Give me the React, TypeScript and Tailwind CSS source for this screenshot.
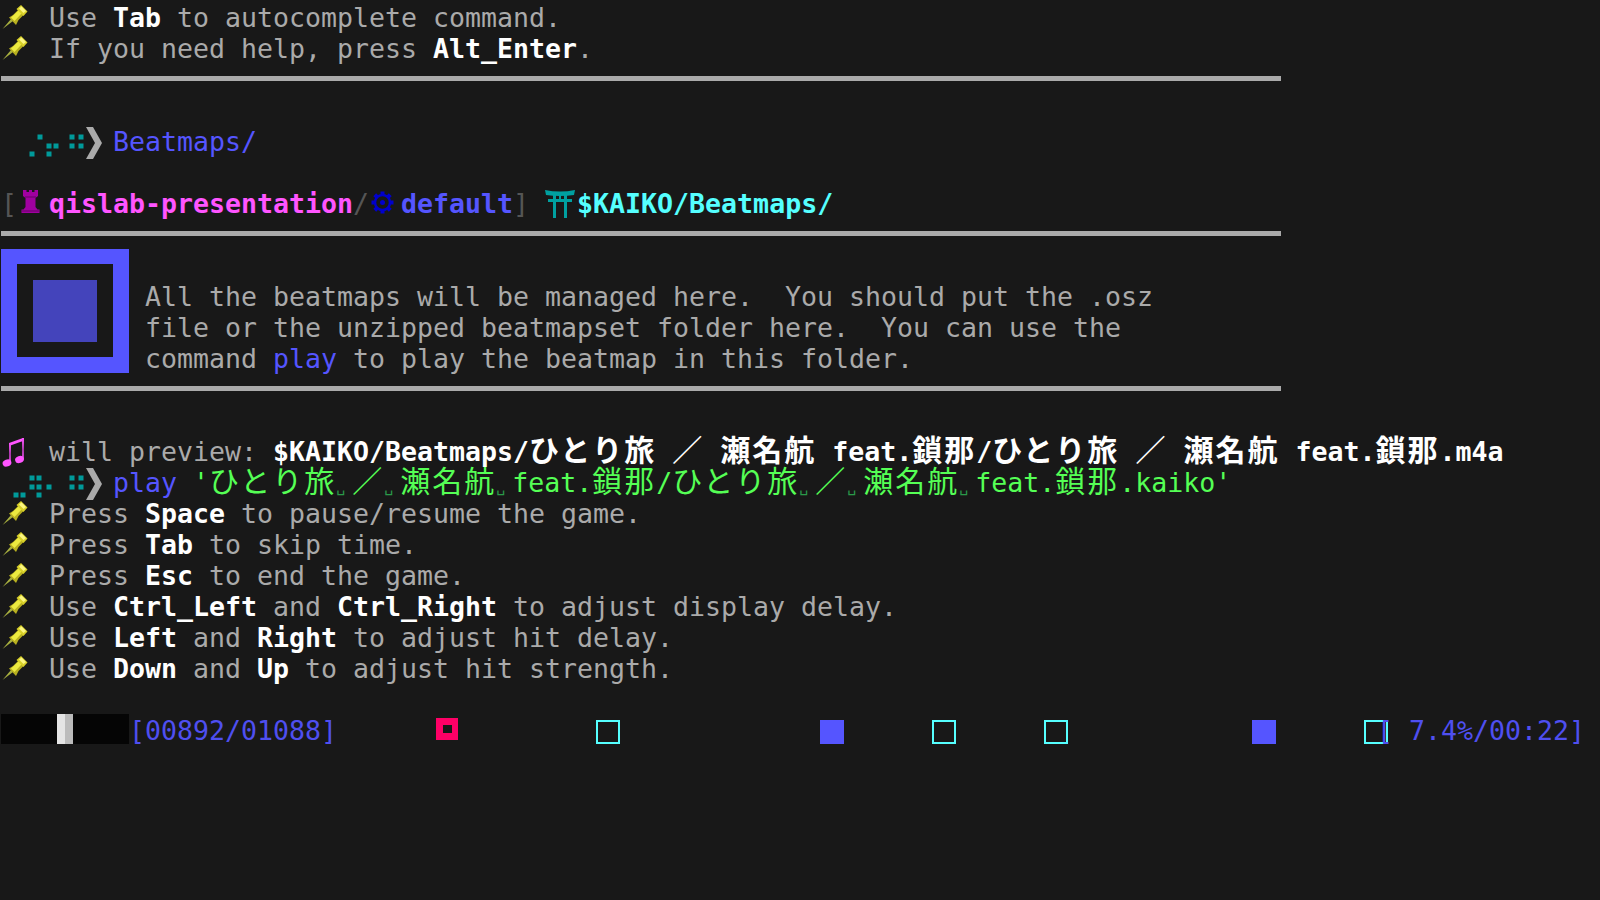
import React from "react";

const J = ({ children }: { children: React.ReactNode }) => (
  <span lang="ja" className="font-['Noto_Sans_CJK_JP',sans-serif] text-[30px] tracking-[2px] leading-[0]">
    {children}
  </span>
);

const Mark = () => (
  <span className="inline-block w-[16px] text-[15px] leading-[0] text-[#2a9a4a]">{"\u2423"}</span>
);

const B = ({ children }: { children: React.ReactNode }) => (
  <span className="font-bold text-white">{children}</span>
);

const Pin = () => (
  <svg width="48" height="31" viewBox="0 0 48 31" className="shrink-0 overflow-visible">
    <path d="M1.5 28 L10 18 L12 20 Z" fill="#a8b040" />
    <path d="M8 16.5 L12 14 L18 8 L23 13.5 L17.5 19 L15 24 Z" fill="#b8b020" />
    <path d="M10 16.5 L18 9 L21 12 L13.5 20 Z" fill="#ecea40" />
    <path d="M15.5 8 L20 4 L26.5 10.5 L22.5 15 Z" fill="#d8d028" />
    <path d="M18 7.5 L20.5 5.5 L25 10 L22.5 12 Z" fill="#fbf680" />
  </svg>
);

const Dots = ({ pts }: { pts: number[][] }) => (
  <svg width="112" height="31" viewBox="0 0 112 31" className="shrink-0 overflow-visible">
    {pts.map(([x, y], i) => (
      <rect key={i} x={x - 3.5} y={y - 2.5} width="5" height="5" fill="#009a9a" />
    ))}
    <polygon points="85,2 92,2 101,18 92,34 85,34 94,18" fill="#aaaaaa" />
  </svg>
);

const Row = ({ icon, children }: { icon?: React.ReactNode; children?: React.ReactNode }) => (
  <div className="flex h-[31px]">
    {icon}
    <div className="whitespace-pre leading-[33px]">{children}</div>
  </div>
);

const Rule = () => (
  <div className="flex h-[31px] items-center">
    <div className="h-[5px] w-[1280px] bg-[#aaaaaa]" />
  </div>
);

const Hint = ({ children }: { children: React.ReactNode }) => <Row icon={<Pin />}>{children}</Row>;

const Rook = () => (
  <svg width="32" height="31" viewBox="0 0 32 31" className="inline-block align-top">
    <path d="M6 3 H9.5 V5 H12 V3 H15 V5 H17.5 V3 H21 V9 L18.5 11 V20 L20.5 22.5 H22.5 V26 H4.5 V22.5 H6.5 L8.5 20 V11 L6 9 Z" fill="#a000a0" />
    <rect x="5" y="23.5" width="17" height="1" fill="#660066" />
    <rect x="8" y="9.5" width="11" height="1" fill="#660066" />
  </svg>
);

const Gear = () => (
  <svg width="32" height="31" viewBox="0 0 32 31" className="inline-block align-top">
    <circle cx="13.5" cy="15.5" r="7.5" fill="none" stroke="#0000cc" strokeWidth="2.5" />
    <circle cx="13.5" cy="15.5" r="2.5" fill="#0000cc" />
    {[0, 45, 90, 135, 180, 225, 270, 315].map((a) => (
      <rect key={a} x="11.5" y="4.5" width="4" height="3.5" fill="#0000cc" transform={`rotate(${a} 13.5 15.5)`} />
    ))}
  </svg>
);

const Torii = () => (
  <svg width="32" height="31" viewBox="0 0 32 31" className="inline-block align-top overflow-visible">
    <path d="M0 3 Q15 6 30 3 L29 8 Q15 10 1 8 Z" fill="#00a0a0" />
    <rect x="3" y="12" width="24" height="3" fill="#00a0a0" />
    <rect x="8" y="8" width="3" height="23" fill="#00a0a0" />
    <rect x="19" y="8" width="3" height="23" fill="#00a0a0" />
    <rect x="14" y="8" width="2" height="5" fill="#00a0a0" />
  </svg>
);

const Note = () => (
  <svg width="48" height="31" viewBox="0 0 48 31" className="shrink-0 overflow-visible">
    <defs>
      <linearGradient id="n" x1="0" y1="0" x2="0" y2="1">
        <stop offset="0" stopColor="#ff55ff" />
        <stop offset="0.55" stopColor="#a838a8" />
        <stop offset="1" stopColor="#d048d0" />
      </linearGradient>
    </defs>
    <path d="M8 8 L22 3 L22 6 L8 11 Z" fill="#ff55ff" />
    <rect x="8" y="8" width="2" height="20" fill="url(#n)" />
    <rect x="21" y="3" width="2" height="21" fill="url(#n)" />
    <ellipse cx="6" cy="28" rx="4.5" ry="3.5" fill="#ff55ff" transform="rotate(-20 6 28)" />
    <ellipse cx="18.5" cy="24.5" rx="4.5" ry="3.5" fill="#ff55ff" transform="rotate(-20 18.5 24.5)" />
  </svg>
);

const Hollow = ({ ml }: { ml: string }) => (
  <div className={`${ml} mt-[6px] h-[24px] w-[24px] shrink-0 border-2 border-[#55ffff]`} />
);
const Solid = ({ ml }: { ml: string }) => (
  <div className={`${ml} mt-[6px] h-[24px] w-[24px] shrink-0 bg-[#5555ff]`} />
);

export default function App() {
  return (
    <div className="h-[900px] w-[1600px] overflow-hidden bg-[#181818] pl-px pt-px font-['DejaVu_Sans_Mono','Noto_Sans_CJK_JP',monospace] text-[26.58px] text-[#aaaaaa]">
      <Hint>
        Use <B>Tab</B> to autocomplete command.
      </Hint>
      <Hint>
        If you need help, press <B>Alt_Enter</B>.
      </Hint>
      <Rule />
      <Row />
      <Row
        icon={
          <Dots
            pts={[
              [40, 12],
              [49, 21],
              [56, 21],
              [32, 29],
              [49, 29],
              [72, 12],
              [81, 12],
              [72, 21],
              [81, 21],
            ]}
          />
        }
      >
        <span className="text-[#5555ff]">Beatmaps/</span>
      </Row>
      <Row />
      <Row>
        <span className="text-[#555555]">[</span>
        <Rook />
        <span className="font-bold text-[#ff55ff]">qislab-presentation</span>
        <span className="text-[#555555]">/</span>
        <Gear />
        <span className="font-bold text-[#5555ff]">default</span>
        <span className="text-[#555555]">]</span> <Torii />
        <span className="font-bold text-[#55ffff]">$KAIKO/Beatmaps/</span>
      </Row>
      <Rule />
      <div className="flex">
        <div className="h-[124px] w-[128px] shrink-0 bg-[#5555ff] p-[15px_16px_16px]">
          <div className="h-[93px] w-[96px] p-[16px_16px_15px] bg-[#181818]">
            <div className="h-[62px] w-[64px] bg-[#4444bb]" />
          </div>
        </div>
        <div className="pl-4">
          <Row />
          <Row>All the beatmaps will be managed here.  You should put the .osz</Row>
          <Row>file or the unzipped beatmapset folder here.  You can use the</Row>
          <Row>
            command <span className="text-[#5555ff]">play</span> to play the beatmap in this folder.
          </Row>
        </div>
      </div>
      <Rule />
      <Row />
      <Row icon={<Note />}>
        will preview:{" "}
        <B>
          $KAIKO/Beatmaps/<J>ひとり旅</J> <J>／</J> <J>瀬名航</J> feat.<J>鎖那</J>/<J>ひとり旅</J> <J>／</J> <J>瀬名航</J> feat.<J>鎖那</J>.m4a
        </B>
      </Row>
      <Row
        icon={
          <Dots
            pts={[
              [32, 12],
              [39, 12],
              [32, 21],
              [39, 21],
              [49, 21],
              [16, 29],
              [23, 29],
              [39, 29],
              [72, 12],
              [81, 12],
              [72, 21],
              [81, 21],
            ]}
          />
        }
      >
        <span className="text-[#5555ff]">play</span>{" "}
        <span className="text-[#55ff55]">
          '<J>ひとり旅</J>
          <Mark />
          <J>／</J>
          <Mark />
          <J>瀬名航</J>
          <Mark />
          feat.<J>鎖那</J>/<J>ひとり旅</J>
          <Mark />
          <J>／</J>
          <Mark />
          <J>瀬名航</J>
          <Mark />
          feat.<J>鎖那</J>.kaiko'
        </span>
      </Row>
      <Hint>
        Press <B>Space</B> to pause/resume the game.
      </Hint>
      <Hint>
        Press <B>Tab</B> to skip time.
      </Hint>
      <Hint>
        Press <B>Esc</B> to end the game.
      </Hint>
      <Hint>
        Use <B>Ctrl_Left</B> and <B>Ctrl_Right</B> to adjust display delay.
      </Hint>
      <Hint>
        Use <B>Left</B> and <B>Right</B> to adjust hit delay.
      </Hint>
      <Hint>
        Use <B>Down</B> and <B>Up</B> to adjust hit strength.
      </Hint>
      <Row />
      <div className="flex h-[31px] text-[#4f4ff0]">
        <div className="flex h-[30px] w-[128px] shrink-0 bg-[#050505] pl-[56px]">
          <div className="w-[8px] bg-[#e4e4e4]" />
          <div className="w-[8px] bg-[#bbbbbb]" />
        </div>
        <div className="whitespace-pre leading-[33px]">[00892/01088]</div>
        <div className="ml-[99px] mt-[4px] flex h-[22px] w-[22px] shrink-0 items-center justify-center bg-[#ff0066]">
          <div className="h-[8px] w-[9px] bg-[#181818]" />
        </div>
        <Hollow ml="ml-[138px]" />
        <Solid ml="ml-[200px]" />
        <Hollow ml="ml-[88px]" />
        <Hollow ml="ml-[88px]" />
        <Solid ml="ml-[184px]" />
        <Hollow ml="ml-[88px]" />
        <div className="relative -ml-[11px] whitespace-pre leading-[33px]">[ 7.4%/00:22]</div>
      </div>
    </div>
  );
}
